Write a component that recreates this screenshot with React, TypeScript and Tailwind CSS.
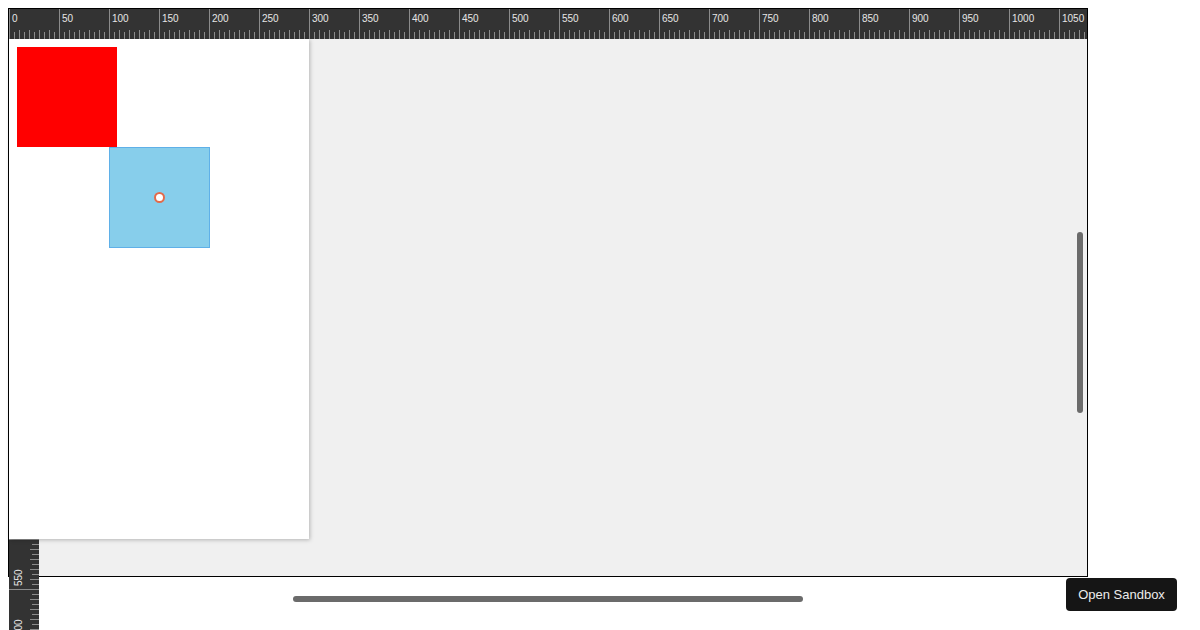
const FONT = { fontFamily: '"Liberation Sans", Arial, sans-serif' };

// ticks every 5px, labelled every 50
function HRuler({ length }: { length: number }) {
  const ticks = Array.from({ length: Math.floor(length / 5) + 1 }, (_, i) => i * 5);
  return (
    <svg width={length} height={30} className="block shrink-0">
      <rect width={length} height={30} fill="#333333" />
      {ticks.map((t) =>
        t % 50 === 0 ? (
          <g key={t}>
            <line x1={t + 0.5} y1={0} x2={t + 0.5} y2={30} stroke="#8c8c8c" />
            <text x={t + 3} y={13} fontSize={10} fill="#e6e6e6" style={FONT}>
              {t}
            </text>
          </g>
        ) : (
          <line key={t} x1={t + 0.5} y1={t % 10 === 0 ? 21 : 23} x2={t + 0.5} y2={30} stroke="#8c8c8c" />
        )
      )}
    </svg>
  );
}

function VRuler({ length }: { length: number }) {
  const ticks = Array.from({ length: Math.floor(length / 5) + 1 }, (_, i) => i * 5);
  return (
    <svg width={30} height={length} className="block">
      <rect width={30} height={length} fill="#333333" />
      {ticks.map((t) =>
        t % 50 === 0 ? (
          <g key={t}>
            <line x1={0} y1={t + 0.5} x2={30} y2={t + 0.5} stroke="#8c8c8c" />
            <text
              transform={`translate(13 ${t - 3}) rotate(-90)`}
              fontSize={10}
              fill="#e6e6e6"
              style={FONT}
            >
              {t}
            </text>
          </g>
        ) : (
          <line key={t} x1={t % 10 === 0 ? 21 : 23} y1={t + 0.5} x2={30} y2={t + 0.5} stroke="#8c8c8c" />
        )
      )}
    </svg>
  );
}

export default function App() {
  return (
    <div className="flex h-[630px] w-[1200px] flex-col overflow-hidden bg-white p-2" style={FONT}>
      {/* ─── Editor frame ──────────────────────────── */}
      <div className="relative flex h-[569px] w-[1080px] shrink-0 flex-col border border-black">
        <HRuler length={1078} />

        <div className="relative flex-1 bg-[#f0f0f0]">
          {/* vertical ruler sits under the page and runs past the frame */}
          <div className="absolute left-0 top-0">
            <VRuler length={620} />
          </div>

          {/* ─── Page ──────────────────────────── */}
          <div className="absolute left-0 top-0 h-[500px] w-[300px] bg-white shadow-[1px_1px_4px_rgba(0,0,0,0.25)]">
            <div className="absolute left-[8px] top-[8px] h-[100px] w-[100px] bg-[#ff0000]" />
            <div className="absolute left-[100px] top-[108px] flex h-[101px] w-[101px] items-center justify-center border border-[#5fb0e8] bg-[#87ceeb]">
              <div className="h-[11px] w-[11px] rounded-full border-2 border-[#e36a4a] bg-white" />
            </div>
          </div>

          {/* vertical scrollbar */}
          <div className="absolute left-[1068px] top-[193px] h-[181px] w-[6px] rounded-full bg-[#6b6b6b]" />
        </div>
      </div>

      {/* ─── Bottom bar: h-scrollbar + sandbox button ──────────────── */}
      <div className="flex items-start">
        <div className="ml-[285px] mt-[19px] h-[6px] w-[510px] rounded-full bg-[#6b6b6b]" />
        <button className="ml-auto mr-[15px] mt-[1px] flex h-[33px] w-[111px] items-center justify-center rounded-[4px] bg-[#151515] text-[13px] text-[#ececec]">
          Open Sandbox
        </button>
      </div>
    </div>
  );
}
